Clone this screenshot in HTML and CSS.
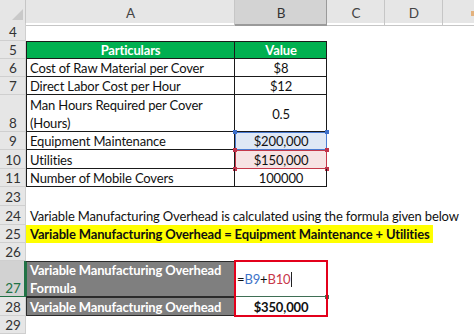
FILE: index.html
```html
<!DOCTYPE html>
<html>
<head>
<meta charset="utf-8">
<link rel="stylesheet" href="styles.css">
</head>
<body>
<div class="sheet">
  <div class="row hdr">
    <div class="corner"><svg width="26" height="23" viewBox="0 0 26 23"><polygon points="23,9 23,20 12,20" fill="#c9c9c9"/></svg></div>
    <div class="ch">A</div>
    <div class="ch sel">B</div>
    <div class="ch">C</div>
    <div class="ch">D</div>
    <div class="ch last"><span class="mark"></span></div>
  </div>

  <div class="row h18"><div class="rh">4</div><div class="c"></div><div class="c"></div><div class="c"></div></div>
  <div class="row h18"><div class="rh">5</div><div class="c t th tl tt">Particulars</div><div class="c t th tt">Value</div><div class="c"></div></div>
  <div class="row h18"><div class="rh">6</div><div class="c t tl">Cost of Raw Material per Cover</div><div class="c t ctr">$8</div><div class="c"></div></div>
  <div class="row h18"><div class="rh">7</div><div class="c t tl">Direct Labor Cost per Hour</div><div class="c t ctr">$12</div><div class="c"></div></div>
  <div class="row h37"><div class="rh bot">8</div><div class="c t tl wrap">Man Hours Required per Cover (Hours)</div><div class="c t ctr">0.5</div><div class="c"></div></div>
  <div class="row h18"><div class="rh">9</div><div class="c t tl">Equipment Maintenance</div><div class="c t ctr ref-blue">$200,000<i class="hd b tlh"></i><i class="hd b trh"></i></div><div class="c"></div></div>
  <div class="row h19"><div class="rh">10</div><div class="c t tl">Utilities</div><div class="c t ctr ref-red">$150,000<i class="hd r tlh"></i><i class="hd r trh"></i><i class="hd r blh"></i><i class="hd r brh"></i></div><div class="c"></div></div>
  <div class="row h18"><div class="rh">11</div><div class="c t tl">Number of Mobile Covers</div><div class="c t ctr">100000</div><div class="c"></div></div>
  <div class="row h19"><div class="rh">23</div><div class="c"></div><div class="c"></div><div class="c"></div></div>
  <div class="row h19"><div class="rh">24</div><div class="c">Variable Manufacturing Overhead is calculated using the formula given below</div><div class="c"></div><div class="c"></div></div>
  <div class="row h18"><div class="rh">25</div><div class="c"><span class="hl">Variable Manufacturing Overhead = Equipment Maintenance + Utilities</span></div><div class="c"></div><div class="c"></div></div>
  <div class="row h18"><div class="rh">26</div><div class="c"></div><div class="c"></div><div class="c"></div></div>
  <div class="row h36"><div class="rh bot act">27</div><div class="c dk wrap act-l">Variable Manufacturing Overhead Formula</div><div class="c fx">=<span class="fb">B9</span>+<span class="fr">B10</span><span class="caret"></span></div><div class="c"></div></div>
  <div class="row h19"><div class="rh">28</div><div class="c dk">Variable Manufacturing Overhead</div><div class="c res">$350,000<i class="fill"></i></div><div class="c"></div></div>
  <div class="row h18"><div class="rh">29</div><div class="c"></div><div class="c"></div><div class="c"></div></div>

  <div class="redbox"></div>
</div>
</body>
</html>
```

FILE: styles.css
```css
* { box-sizing: border-box; }
html, body { margin: 0; padding: 0; background: #fff; }
body {
  font-family: "Lato", "Liberation Sans", sans-serif;
  font-size: 13px;
  letter-spacing: -0.15px;
  color: #111;
  overflow: hidden;
  width: 474px;
  height: 334px;
}
.sheet { position: relative; width: 474px; }
.row {
  display: grid;
  grid-template-columns: 26px 209px 92px 1fr;
}
.row.hdr {
  grid-template-columns: 26px 209px 92px 58px 58px 1fr;
  height: 23px;
  background: #e6e6e6;
}
.h18 { height: 18px; }
.h19 { height: 19px; }
.h36 { height: 36px; }
.h37 { height: 37px; }

.corner { box-shadow: inset -1px -1px 0 #c6c6c6; }
.ch {
  display: flex; align-items: center; justify-content: center;
  color: #444; font-size: 13.5px; letter-spacing: 0;
  box-shadow: inset -1px -1px 0 #c6c6c6;
}
.ch.sel { background: #d3d3d3; box-shadow: inset -1px -2px 0 #9a9a9a; color: #333; }
.ch.last { justify-content: flex-end; box-shadow: inset 0 -1px 0 #c6c6c6; }
.mark { width: 3px; height: 5px; background: #e3b27e; }

.rh {
  background: #e6e6e6;
  color: #333;
  display: flex; align-items: center; justify-content: center;
  box-shadow: inset -1px -1px 0 #cfcfcf;
  font-size: 13.5px; letter-spacing: 0;
}
.rh.bot { align-items: flex-end; padding-bottom: 1px; }
.rh.act { background: #d2d2d2; color: #217346; box-shadow: inset -2px -1px 0 #217346; }

.c {
  position: relative;
  display: flex; align-items: center;
  padding-left: 4px;
  white-space: nowrap;
  line-height: 18px;
}
.c.wrap { white-space: normal; }
.c.ctr { justify-content: center; padding-left: 0; }

.t { box-shadow: inset -1px -1px 0 #1a1a1a; }
.t.tl { box-shadow: inset -1px -1px 0 #1a1a1a, inset 1px 0 0 #1a1a1a; }
.t.tt { box-shadow: inset -1px -1px 0 #1a1a1a, inset 0 1px 0 #1a1a1a; }
.t.tl.tt { box-shadow: inset -1px -1px 0 #1a1a1a, inset 1px 1px 0 #1a1a1a; }
.th {
  background: #00b050; color: #fff; font-weight: 700;
  justify-content: center; padding-left: 0;
}

.ref-blue { background: #dfe8f5; box-shadow: inset 0 0 0 1px #4a7bd0, inset 0 -1px 0 #1a1a1a; }
.ref-red { background: #f7e3e4; box-shadow: inset 0 0 0 1px #c4384a; }
.hd { position: absolute; width: 4px; height: 4px; }
.hd.b { background: #3d6fc8; }
.hd.r { background: #c0324a; }
.tlh { left: -2px; top: -2px; }
.trh { right: -2px; top: -2px; }
.blh { left: -2px; bottom: -2px; }
.brh { right: -2px; bottom: -2px; }

.hl {
  display: inline-flex; align-items: center;
  height: 100%;
  margin-left: -4px; padding-left: 4px; padding-right: 3px;
  background: #ffff00; font-weight: 700;
}

.dk {
  background: #7f7f7f; color: #fff; font-weight: 700;
  box-shadow: inset -1px -1px 0 #2a2a2a, inset 1px 1px 0 #2a2a2a;
}
.dk.act-l { box-shadow: inset -1px -1px 0 #2a2a2a, inset 0 1px 0 #2a2a2a, inset 1px 0 0 #217346; }
.fx { padding-left: 2px; color: #111; box-shadow: inset 0 -1px 0 #3f6f55; }
.fb { color: #3d72c8; }
.fr { color: #c8374a; }
.caret { display: inline-block; width: 1px; height: 15px; background: #222; margin-left: 1px; }
.res { justify-content: center; padding-left: 0; font-weight: 700; }
.fill { position: absolute; right: -2px; top: -2px; width: 4px; height: 4px; background: #3f6f55; }

.redbox {
  position: absolute;
  left: 234px; top: 260px;
  width: 94px; height: 57px;
  border: 2px solid #e3001b;
  pointer-events: none;
}
```
